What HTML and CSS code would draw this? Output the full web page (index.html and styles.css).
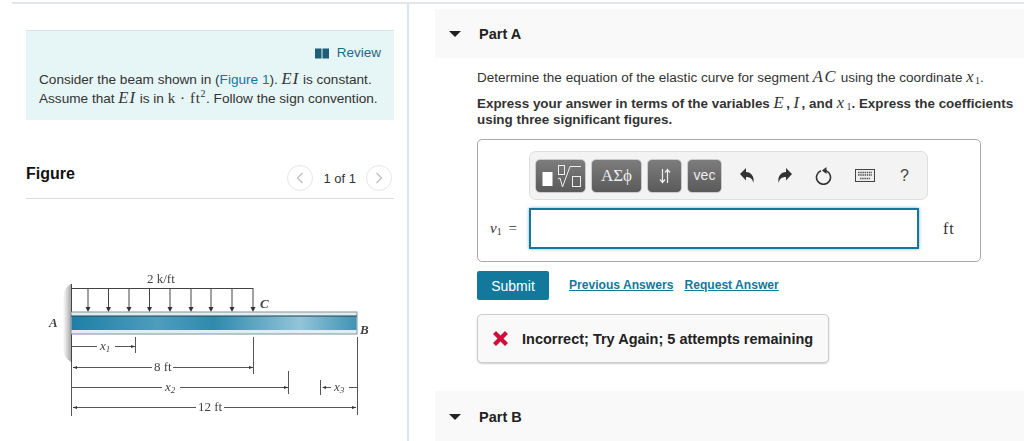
FILE: index.html
```html
<!DOCTYPE html>
<html lang="en">
<head>
  <meta charset="UTF-8" />
  <title>Part A</title>
  <link rel="stylesheet" href="styles.css">
</head>
<body>
  <div class="page">
    <div class="left">
      <div class="intro">
        <div class="review">
          <svg class="book" width="14" height="11" viewBox="0 0 14 11"><path d="M0 .5h6.500v10H0zM7.500 .5H14v10H7.500z" fill="#1d5f78"/></svg>
          <a>Review</a>
        </div>
        <p>Consider the beam shown in (<a>Figure 1</a>). <i class="m m-big">EI</i> is constant.<br>
        Assume that <i class="m m-big">EI</i> is in <span class="m m-unit">k · ft<sup>2</sup></span>. Follow the sign convention.</p>
      </div>

      <div class="figure-head">
        <h2>Figure</h2>
        <div class="pager">
          <span class="circle"><svg width="8" height="12" viewBox="0 0 8 12"><path d="M6.500 1L1.500 6l5 5" fill="none" stroke="#bbb" stroke-width="1.200"/></svg></span>
          <span class="count">1 of 1</span>
          <span class="circle"><svg width="8" height="12" viewBox="0 0 8 12"><path d="M1.500 1l5 5-5 5" fill="none" stroke="#bbb" stroke-width="1.200"/></svg></span>
        </div>
      </div>

      <svg class="beam" width="350" height="181" viewBox="30 260 350 181">
        <defs>
          <linearGradient id="steel" x1="0" x2="1" y1="0" y2="0">
            <stop offset="0" stop-color="#1d7fa6"/>
            <stop offset="0.3" stop-color="#4e9dbd"/>
            <stop offset="0.5" stop-color="#2e8aae"/>
            <stop offset="0.8" stop-color="#93c4d8"/>
            <stop offset="1" stop-color="#3f93b5"/>
          </linearGradient>
          <linearGradient id="wall" x1="0" x2="1" y1="0" y2="0">
            <stop offset="0" stop-color="#fff"/>
            <stop offset="1" stop-color="#a9a9a9"/>
          </linearGradient>
        </defs>
        <path d="M71 284v78c-5-3-8-8-8-14v-50c0-6 3-11 8-14z" fill="url(#wall)"/>
        <g stroke="#444" stroke-width="1" fill="none">
          <path d="M71.500 284v79M71.500 288.500H253"/>
          <path d="M88 288v20M108.500 288v20M129 288v20M149.500 288v20M170 288v20M191 288v20M211 288v20M232 288v20M253 288v20"/>
        </g>
        <path fill="#333" d="M85.500 307h5L88 312zM106 307h5l-2.500 5zM126.500 307h5L129 312zM147 307h5l-2.500 5zM167.500 307h5L170 312zM188.500 307h5L191 312zM208.500 307h5L211 312zM229.500 307h5L232 312zM250.500 307h5L253 312z"/>
        <rect x="71" y="312" width="286" height="22" fill="#dfeef3" stroke="#8a8f92"/>
        <rect x="71.500" y="316" width="285" height="14" fill="url(#steel)"/>
        <path d="M71 316h286" stroke="#25424f" stroke-width="1"/>
        <g stroke="#555" stroke-width="1" fill="none">
          <path d="M135.500 337v16M253.500 337v37M357.500 337v78M71.500 363v53M288.500 371v23M320.500 380v15"/>
          <path d="M72 346.500h25M115 346.500h20"/>
          <path d="M73 367.500h79M173 367.500h80M72 387.500h90M180 387.500h108M324 387.500h7M349 387.500h8M73 407.500h123M224 407.500h132"/>
        </g>
        <path fill="#333" d="M135 346.500l-4-1.500v3zM73 367.500l4-1.500v3zM253 367.500l-4-1.500v3zM288 387.500l-4-1.500v3zM322 387.500l4-1.500v3zM73 407.500l4-1.500v3zM356 407.500l-4-1.500v3z"/>
        <g class="beam-text">
          <text x="147" y="283">2 k/ft</text>
          <text x="154" y="371">8 ft</text>
          <text x="198" y="411">12 ft</text>
          <text class="it" x="100" y="350">x<tspan class="sub" dy="2">1</tspan></text>
          <text class="it" x="165" y="391">x<tspan class="sub" dy="2">2</tspan></text>
          <text class="it" x="334" y="391">x<tspan class="sub" dy="2">3</tspan></text>
          <text class="it lab" x="49" y="327">A</text>
          <text class="it lab" x="260" y="308">C</text>
          <text class="it lab" x="360" y="334">B</text>
        </g>
      </svg>
    </div>

    <div class="right">
      <div class="part-bar">
        <span class="caret"></span><span>Part A</span>
      </div>
      <div class="part-body">
        <p class="question">Determine the equation of the elastic curve for segment <i class="m m-big">AC</i> using the coordinate <i class="m m-big">x</i><span class="m msub">1</span>.</p>
        <p class="instr">Express your answer in terms of the variables <i class="m m-big">E</i>, <i class="m m-big">I</i>, and <i class="m m-big">x</i><span class="m msub">1</span>. Express the coefficients<br>using three significant figures.</p>

        <div class="answer">
          <div class="toolbar">
            <button class="tool tool-tpl">
              <svg width="42" height="26" viewBox="0 0 42 26">
                <rect x="2.500" y="9" width="10" height="14" fill="#fff"/>
                <path d="M18 16l2-1 2.500 9L30 3.500H41" fill="none" stroke="#eee" stroke-width="1"/>
                <rect x="32.500" y="13.500" width="8" height="10" fill="none" stroke="#eee"/>
                <rect x="18.500" y="2.500" width="6" height="9" fill="none" stroke="#eee"/>
              </svg>
            </button>
            <button class="tool tool-greek">ΑΣϕ</button>
            <button class="tool tool-arrows">
              <svg width="14" height="16" viewBox="0 0 14 16"><path d="M4.500 1v13M2 11.500l2.500 3 2.500-3M9.500 15V2M7 4.500l2.500-3 2.500 3" fill="none" stroke="#eee" stroke-width="1.200"/></svg>
            </button>
            <button class="tool tool-vec">vec</button>
            <span class="icons">
              <svg width="16" height="17" viewBox="0 0 16 17"><path d="M1 7l6-6v4c5 0 8.500 4 7.500 11-1-4-3-6-7.500-6v3.500z" fill="#333"/></svg>
              <svg width="16" height="17" viewBox="0 0 16 17"><path d="M15 7L9 1v4c-5 0-8.500 4-7.500 11 1-4 3-6 7.500-6v3.500z" fill="#333"/></svg>
              <svg width="18" height="18" viewBox="0 0 18 18"><path d="M6 3.800a7 7 0 1 0 5 0" fill="none" stroke="#333" stroke-width="1.600"/><path d="M11.500 0v7L7 3.500z" fill="#333"/></svg>
              <svg width="20" height="13" viewBox="0 0 20 13"><rect x=".5" y=".5" width="19" height="12" fill="#eee" stroke="#444"/><path d="M3 3.500h14M3 6h14M5 9.500h10" stroke="#555" stroke-width="1.400" stroke-dasharray="1.500 .7"/></svg>
              <span class="help">?</span>
            </span>
          </div>
          <div class="answer-row">
            <label class="var"><i>v</i><span class="var-sub">1</span> =</label>
            <input type="text" class="answer-input" />
            <span class="unit">ft</span>
          </div>
        </div>

        <div class="actions">
          <button class="submit">Submit</button>
          <a href="#">Previous Answers</a>
          <a href="#">Request Answer</a>
        </div>

        <div class="feedback">
          <svg width="15" height="15" viewBox="0 0 15 15"><path d="M0 3l3-3 4.500 4.500L12 0l3 3-4.500 4.500L15 12l-3 3-4.500-4.500L3 15l-3-3 4.500-4.500z" fill="#d0103a"/></svg>
          <span>Incorrect; Try Again; 5 attempts remaining</span>
        </div>
      </div>
      <div class="part-bar part-b">
        <span class="caret"></span><span>Part B</span>
      </div>
    </div>
  </div>
</body>
</html>
```

FILE: styles.css
```css
* {
  margin: 0;
  padding: 0;
  box-sizing: border-box;
}

html, body {
  height: 441px;
  overflow: hidden;
  background: #ffffff;
}

body {
  padding-top: 2px;
  font-family: "Liberation Sans", Arial, sans-serif;
  font-size: 14px;
  color: #333;
}

.page {
  display: flex;
  height: 439px;
  margin-left: 12px;
  border-top: 2px solid #e3e6e9;
}

/* left column */
.left {
  width: 397px;
  padding: 26px 13px 0 14px;
  border-right: 2px solid #dbe3ec;
  flex-shrink: 0;
}

.intro {
  height: 90px;
  background: #e6f5f6;
  border-top: 1px solid #dde3e5;
  padding: 13px 13px 0 13px;
  font-size: 13.600px;
  line-height: 18.500px;
}

.intro a {
  color: #12799c;
}

.review {
  display: flex;
  justify-content: flex-end;
  align-items: center;
  gap: 8px;
  height: 18px;
  margin-bottom: 9px;
  font-size: 13.500px;
}

.review a {
  color: #1d6a85;
}

.m {
  font-family: "Liberation Serif", serif;
}

.m-big {
  font-size: 16.500px;
  line-height: 0;
  letter-spacing: 1px;
}

.m-unit {
  font-size: 15px;
  line-height: 0;
  letter-spacing: 0.600px;
}

.msub {
  font-size: 10px;
  line-height: 0;
  position: relative;
  top: 2px;
}

.intro sup {
  font-size: 10px;
  line-height: 0;
}

.figure-head {
  display: flex;
  justify-content: space-between;
  align-items: center;
  height: 79px;
  padding-top: 38px;
  border-bottom: 1px solid #dcdfe2;
}

.figure-head h2 {
  font-size: 16px;
  color: #111;
  margin-top: -8px;
}

.pager {
  display: flex;
  align-items: center;
  gap: 10px;
  font-size: 13px;
  margin-right: 2px;
}

.circle {
  display: flex;
  align-items: center;
  justify-content: center;
  width: 26px;
  height: 26px;
  border: 1px solid #e6e6e6;
  border-radius: 50%;
}

.beam {
  display: block;
  margin: 61px 0 0 4px;
  filter: blur(0.350px);
}

.beam-text text {
  font-family: "Liberation Serif", serif;
  font-size: 13px;
  fill: #444;
}

.beam-text .it {
  font-style: italic;
}

.beam-text .lab {
  font-size: 13px;
  font-weight: bold;
}

.beam-text .sub {
  font-size: 9px;
}

/* right column */
.right {
  flex: 1;
  padding: 5px 0 0 26px;
  min-width: 0;
}

.part-bar {
  display: flex;
  align-items: center;
  height: 49px;
  padding-top: 1px;
  background: #f9f9f9;
  font-size: 14.500px;
  font-weight: bold;
  color: #222;
  padding-left: 14px;
}

.caret {
  width: 0;
  height: 0;
  margin-right: 18px;
  border-left: 6px solid transparent;
  border-right: 6px solid transparent;
  border-top: 6px solid #222;
}

.part-body {
  padding: 10px 0 0 42px;
}

.question {
  font-size: 13.520px;
  line-height: 20px;
  margin-bottom: 8px;
  white-space: nowrap;
}

.question .m-big {
  letter-spacing: 1.500px;
}

.instr {
  font-size: 13.420px;
  font-weight: bold;
  line-height: 16px;
  margin-bottom: 11px;
  white-space: nowrap;
}

.instr .m {
  font-weight: normal;
}

.instr .m-big {
  letter-spacing: 2.500px;
}

.answer {
  width: 504px;
  height: 123px;
  border: 1px solid #aaa;
  border-radius: 5px;
  padding: 11px 0 0 51px;
}

.toolbar {
  display: flex;
  align-items: center;
  gap: 5px;
  width: 399px;
  height: 49px;
  padding-left: 5px;
  background: #f3f3f3;
  border: 1px solid #dedede;
  border-radius: 7px;
}

.tool {
  display: flex;
  align-items: center;
  justify-content: center;
  height: 34px;
  border: 1px solid #ccc;
  border-radius: 5px;
  background: linear-gradient(#7d7d7d, #5a5a5a);
  color: #eee;
  font-family: "Liberation Sans", Arial, sans-serif;
  font-size: 14px;
}

.tool-tpl,
.tool-greek {
  width: 51px;
}

.tool-greek {
  font-family: "Liberation Serif", serif;
  font-size: 17px;
}

.tool-arrows,
.tool-vec {
  width: 35px;
}

.tool-vec {
  padding-bottom: 2px;
}

.icons {
  display: flex;
  align-items: center;
  gap: 22px;
  margin-left: 12px;
}

.help {
  font-size: 16px;
  margin-left: 3px;
  color: #444;
}

.answer-row {
  display: flex;
  align-items: center;
  margin-top: 8px;
  position: relative;
}

.var {
  position: absolute;
  right: 100%;
  margin-right: 12px;
  white-space: nowrap;
  font-family: "Liberation Serif", serif;
  font-size: 15px;
}

.var-sub {
  font-size: 10px;
  margin-right: 3px;
  position: relative;
  top: 2px;
}

.answer-input {
  width: 390px;
  height: 41px;
  border: 2px solid #12799c;
  box-shadow: 0 0 3px rgba(18, 121, 156, 0.6);
  outline: none;
}

.unit {
  margin-left: 24px;
  font-family: "Liberation Serif", serif;
  font-size: 16px;
  letter-spacing: 1px;
}

.actions {
  display: flex;
  align-items: center;
  margin-top: 9px;
}

.submit {
  width: 72px;
  height: 29px;
  background: #12799c;
  color: #fff;
  border: none;
  border-radius: 2px;
  font-family: "Liberation Sans", Arial, sans-serif;
  font-size: 14px;
  margin-right: 20px;
}

.actions a {
  color: #12799c;
  font-size: 12.100px;
  font-weight: bold;
  margin-right: 11px;
  position: relative;
  top: -1px;
}

.feedback {
  display: flex;
  align-items: center;
  gap: 14px;
  width: 352px;
  height: 49px;
  margin-top: 14px;
  padding-left: 15px;
  background: #f9f9f9;
  border: 1px solid #ccc;
  border-radius: 5px;
  box-shadow: 0 1px 2px rgba(0, 0, 0, 0.2);
  font-size: 14.500px;
  font-weight: bold;
  color: #222;
}

.part-b {
  margin-top: 28px;
  height: 50px;
}
```
